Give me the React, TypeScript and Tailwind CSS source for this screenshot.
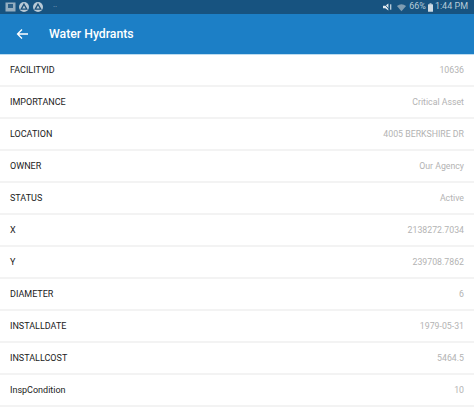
import React from 'react';

const rows: [string, string][] = [
  ['FACILITYID', '10636'],
  ['IMPORTANCE', 'Critical Asset'],
  ['LOCATION', '4005 BERKSHIRE DR'],
  ['OWNER', 'Our Agency'],
  ['STATUS', 'Active'],
  ['X', '2138272.7034'],
  ['Y', '239708.7862'],
  ['DIAMETER', '6'],
  ['INSTALLDATE', '1979-05-31'],
  ['INSTALLCOST', '5464.5'],
  ['InspCondition', '10'],
];

const Drive = () => (
  <svg width="10" height="10" viewBox="0 0 10 10" className="text-[#b9cad6]">
    <circle cx="5" cy="5" r="5" fill="currentColor" />
    <path d="M5 2.2 L7.8 7.2 H2.2 Z" fill="none" stroke="#1c5079" strokeWidth="1.3" />
  </svg>
);

const StatusBar = () => (
  <div className="h-[14px] bg-[#175380] flex items-center justify-between pl-[5px] pr-[6px] text-[#b6cbd9] text-[9px]">
    <div className="flex items-center gap-[3px]">
      <svg width="11" height="10" viewBox="0 0 11 10">
        <rect x="0.5" y="0.5" width="10" height="9" fill="#95aec0" />
        <rect x="3" y="2" width="5" height="4" fill="#2d5f86" />
      </svg>
      <Drive />
      <span className="ml-[1px]"><Drive /></span>
      <span className="ml-[7px] text-[8px] leading-none text-[#8fb0c6]">··</span>
    </div>
    <div className="flex items-center gap-[2px]">
      <svg width="9" height="10" viewBox="0 0 10 10" className="mr-[2px]">
        <path d="M0 3.5 H2.5 L6 1 V9 L2.5 6.5 H0 Z" fill="#dfe8ee" />
        <path d="M1 1 L8 9" stroke="#175380" strokeWidth="1" />
        <rect x="8" y="2" width="1.2" height="6" fill="#dfe8ee" />
      </svg>
      <svg width="11" height="10" viewBox="0 0 12 10">
        <path d="M1 4 Q6 0 11 4 L6 9.5 Z" fill="#7f9cb1" />
      </svg>
      <span>66%</span>
      <svg width="5" height="9" viewBox="0 0 6 10">
        <rect x="1.8" y="0" width="2.4" height="1.5" fill="#cfdce5" />
        <rect x="0" y="1.2" width="6" height="8.8" rx="0.6" fill="#cfdce5" />
      </svg>
      <span>1:44 PM</span>
    </div>
  </div>
);

export default function App() {
  return (
    <div className="w-[474px] h-[413px] overflow-hidden bg-[#f3f3f3] font-['Roboto',sans-serif]">
      <StatusBar />
      <div className="h-[41px] bg-[#1c7fc6] border-b border-[#bcdcf0] flex items-center pl-[16px] text-white">
        <svg width="13" height="12" viewBox="0 0 13 12" fill="none" stroke="currentColor" strokeWidth="1.3">
          <path d="M12 6 H1.5 M6 1.5 L1.5 6 L6 10.5" />
        </svg>
        <span className="ml-[20px] pt-[1px] text-[12.25px] font-medium">Water Hydrants</span>
      </div>
      <div className="flex flex-col gap-[2px]">
        {rows.map(([label, value]) => (
          <div key={label} className="h-[30px] bg-white flex items-center justify-between pl-[10px] pr-[10px]">
            <span className="text-[9px] pt-[1px] text-[#222222]">{label}</span>
            <span className="text-[8.75px] pt-[1px] text-[#b3b3b3]">{value}</span>
          </div>
        ))}
        <div className="h-[6px] bg-white" />
      </div>
    </div>
  );
}
